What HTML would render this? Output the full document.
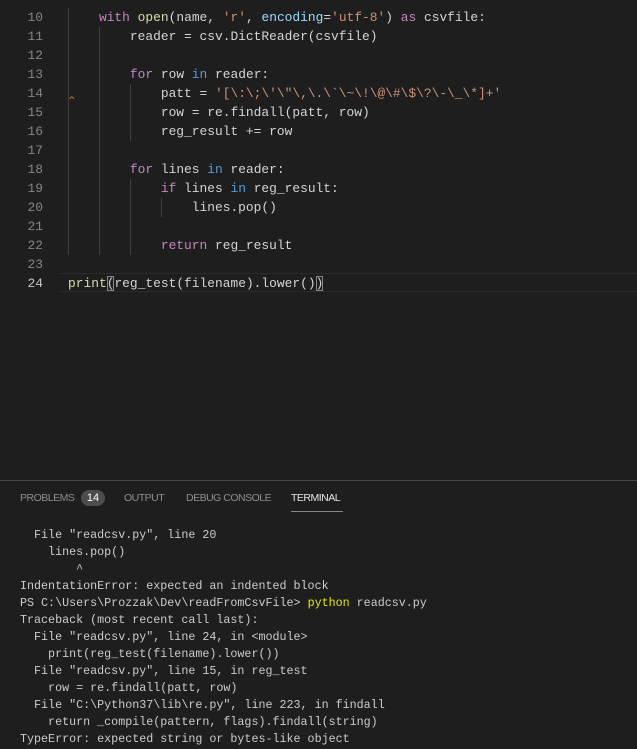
<!DOCTYPE html>
<html><head><style>
html,body{margin:0;padding:0;background:#1e1e1e;width:637px;height:749px;overflow:hidden;position:relative}
.l{position:absolute;white-space:pre;font-family:"Liberation Mono",monospace;font-size:12.9px;line-height:19px;color:#d4d4d4}
.n{position:absolute;width:43px;text-align:right;font-family:"Liberation Mono",monospace;font-size:12.9px;line-height:19px;color:#858585}
.k{color:#c586c0}.b{color:#569cd6}.f{color:#dcdcaa}.s{color:#ce9178}.p{color:#9cdcfe}
.g{position:absolute;width:1px;background:#404040}
.t{position:absolute;white-space:pre;font-family:"Liberation Mono",monospace;font-size:11.7px;line-height:17px;color:#cccccc;left:20px}
.tab{position:absolute;top:492px;font-family:"Liberation Sans",sans-serif;font-size:10.5px;color:#8f8f8f;letter-spacing:-0.5px}
</style></head><body>
<div class="g" style="left:68px;top:8px;height:247px"></div>
<div class="g" style="left:99px;top:27px;height:228px"></div>
<div class="g" style="left:130px;top:84px;height:57px"></div>
<div class="g" style="left:130px;top:179px;height:76px"></div>
<div class="g" style="left:161px;top:198px;height:19px"></div>
<div style="position:absolute;left:60px;top:273px;width:577px;height:19px;border-top:1px solid #2a2a2a;border-bottom:1px solid #2a2a2a;box-sizing:border-box"></div>

<div class="n" style="top:8px">10</div><div class="l" style="left:68px;top:8px">    <span class="k">with</span> <span class="f">open</span>(name, <span class="s">'r'</span>, <span class="p">encoding</span>=<span class="s">'utf-8'</span>) <span class="k">as</span> csvfile:</div>
<div class="n" style="top:27px">11</div><div class="l" style="left:68px;top:27px">        reader = csv.DictReader(csvfile)</div>
<div class="n" style="top:46px">12</div>
<div class="n" style="top:65px">13</div><div class="l" style="left:68px;top:65px">        <span class="k">for</span> row <span class="b">in</span> reader:</div>
<div class="n" style="top:84px">14</div><div class="l" style="left:68px;top:84px">            patt = <span class="s">'[\:\;\'\"\,\.\`\~\!\@\#\$\?\-\_\*]+'</span></div>
<div style="position:absolute;left:68px;top:96px;color:#cca700;font-size:9px;font-family:'DejaVu Sans',sans-serif">^</div>
<div class="n" style="top:103px">15</div><div class="l" style="left:68px;top:103px">            row = re.findall(patt, row)</div>
<div class="n" style="top:122px">16</div><div class="l" style="left:68px;top:122px">            reg_result += row</div>
<div class="n" style="top:141px">17</div>
<div class="n" style="top:160px">18</div><div class="l" style="left:68px;top:160px">        <span class="k">for</span> lines <span class="b">in</span> reader:</div>
<div class="n" style="top:179px">19</div><div class="l" style="left:68px;top:179px">            <span class="k">if</span> lines <span class="b">in</span> reg_result:</div>
<div class="n" style="top:198px">20</div><div class="l" style="left:68px;top:198px">                lines.pop()</div>
<div class="n" style="top:217px">21</div>
<div class="n" style="top:236px">22</div><div class="l" style="left:68px;top:236px">            <span class="k">return</span> reg_result</div>
<div class="n" style="top:255px">23</div>
<div class="n" style="top:274px;color:#c6c6c6">24</div><div class="l" style="left:68px;top:274px"><span class="f">print</span><span style="outline:1px solid #888;outline-offset:-1px">(</span>reg_test(filename).lower()<span style="outline:1px solid #888;outline-offset:-1px">)</span></div>

<div style="position:absolute;left:0;top:480px;width:637px;height:1px;background:#454545"></div>
<div class="tab" style="left:20px">PROBLEMS</div>
<div style="position:absolute;left:81px;top:490px;width:24px;height:16px;border-radius:8px;background:#4d4d4d;color:#fff;font-family:'Liberation Sans',sans-serif;font-size:11px;text-align:center;line-height:16px">14</div>
<div class="tab" style="left:124px">OUTPUT</div>
<div class="tab" style="left:186px">DEBUG CONSOLE</div>
<div class="tab" style="left:291px;color:#e7e7e7">TERMINAL</div>
<div style="position:absolute;left:291px;top:511px;width:52px;height:1px;background:#888"></div>

<div class="t" style="top:527px">  File "readcsv.py", line 20</div>
<div class="t" style="top:544px">    lines.pop()</div>
<div class="t" style="top:561px">        ^</div>
<div class="t" style="top:578px">IndentationError: expected an indented block</div>
<div class="t" style="top:595px">PS C:\Users\Prozzak\Dev\readFromCsvFile&gt; <span style="color:#e5e510">python</span> readcsv.py</div>
<div class="t" style="top:612px">Traceback (most recent call last):</div>
<div class="t" style="top:629px">  File "readcsv.py", line 24, in &lt;module&gt;</div>
<div class="t" style="top:646px">    print(reg_test(filename).lower())</div>
<div class="t" style="top:663px">  File "readcsv.py", line 15, in reg_test</div>
<div class="t" style="top:680px">    row = re.findall(patt, row)</div>
<div class="t" style="top:697px">  File "C:\Python37\lib\re.py", line 223, in findall</div>
<div class="t" style="top:714px">    return _compile(pattern, flags).findall(string)</div>
<div class="t" style="top:731px">TypeError: expected string or bytes-like object</div>
</body></html>
